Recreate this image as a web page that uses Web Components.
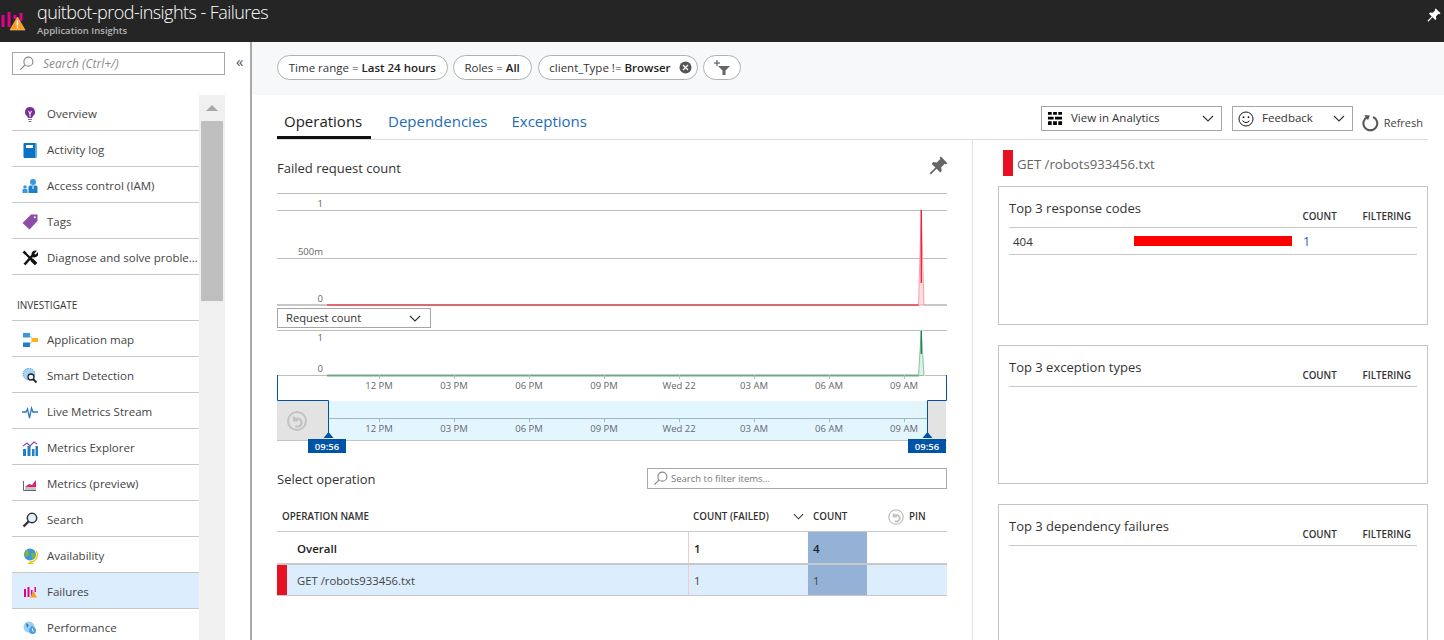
<!DOCTYPE html>
<html><head><meta charset="utf-8"><title>Failures</title>
<style>
html,body{margin:0;padding:0;height:640px;overflow:hidden;background:#fff;font-family:"Open Sans","Noto Sans",sans-serif;color:#333}
</style></head><body>
<x-app>
  <x-header slot="header" title-text="quitbot-prod-insights - Failures" sub="Application Insights"></x-header>
  <x-sidebar slot="side">
    <x-nav><svg slot="i" viewBox="0 0 16 16"><path d="M8 1a5 5 0 0 0-3 9l1 2h4l1-2a5 5 0 0 0-3-9z" fill="#7a2e98"/><path d="M6.500 5l1.500 3 1.500-3M8 8v3" stroke="#fff" fill="none"/><path d="M6 13.500h4M6.500 15.500h3" stroke="#777" stroke-width="1.200"/></svg>Overview</x-nav>
    <x-nav><svg slot="i" viewBox="0 0 16 16"><rect x="1.500" y="1" width="13" height="15" rx="1" fill="#0a72c4"/><rect x="13" y="1" width="1.500" height="15" fill="#59a8e0"/><rect x="4" y="3" width="7" height="3" fill="#fff"/></svg>Activity log</x-nav>
    <x-nav><svg slot="i" viewBox="0 0 16 16"><circle cx="11" cy="4" r="3" fill="#3a96dd"/><path d="M6.500 15V9q0-1.500 1.500-1.500h6q1.500 0 1.500 1.500v6z" fill="#1e80c8"/><path d="M11 8v3" stroke="#fff"/><circle cx="3" cy="9" r="1.800" fill="#3a96dd"/><path d="M.5 15v-3q0-1 1-1h3q1 0 1 1v3z" fill="#3a96dd"/></svg>Access control (IAM)</x-nav>
    <x-nav><svg slot="i" viewBox="0 0 16 16"><path d="M9 .5h6.500V7L7.500 15.500 .5 9z" fill="#8a4ea8"/><circle cx="12.800" cy="3.200" r="1" fill="#fff"/></svg>Tags</x-nav>
    <x-nav><svg slot="i" viewBox="0 0 16 16"><path d="M2.500 2.500L14 14" stroke="#111" stroke-width="2.200"/><path d="M9.500 9.500L14 14" stroke="#111" stroke-width="3.400"/><path d="M.5 2.500L2.500.5l2 2.500L3 4.500z" fill="#111"/><path d="M2.500 14.500L10.500 5.500" stroke="#111" stroke-width="2.600"/><path d="M9.500 5a4 4 0 0 1 5.500-4.200L12.500 3.300l.2 1 1 .2L16 2a4 4 0 0 1-4.500 5.500z" fill="#111"/></svg>Diagnose and solve proble...</x-nav>
    <x-section>INVESTIGATE</x-section>
    <x-nav><svg slot="i" viewBox="0 0 16 16"><rect x="1" y="1" width="7" height="4.500" fill="#3a96dd"/><rect x="1" y="10.500" width="7" height="4.500" fill="#1e80c8"/><path d="M8 3.500l3 4.500-3 4.500" stroke="#9cc8ea" fill="none"/><rect x="9.500" y="6" width="6.500" height="4" fill="#ffb020"/></svg>Application map</x-nav>
    <x-nav><svg slot="i" viewBox="0 0 16 16"><circle cx="7" cy="6" r="5.800" fill="#a8d4f0" stroke="#3a96dd" stroke-dasharray="1.500 1"/><circle cx="9" cy="9" r="3" fill="#e8f4fc" stroke="#222" stroke-width="1.300"/><path d="M11 11l3.500 3.500" stroke="#222" stroke-width="1.800"/></svg>Smart Detection</x-nav>
    <x-nav><svg slot="i" viewBox="0 0 16 16"><path d="M0 8h4l1.500-3 2 9 2-10 1.500 4h5" fill="none" stroke="#2a78c0" stroke-width="1.300"/></svg>Live Metrics Stream</x-nav>
    <x-nav><svg slot="i" viewBox="0 0 16 16"><path d="M1 6l4-3 3 3 4-4 3 2" fill="none" stroke="#8a4ea8" stroke-width="1.200"/><path d="M1 9h3v7H1zM5.500 6h3v10h-3zM10 9h2.500v7H10zM13.500 6H16v10h-2.500z" fill="#1e80c8"/></svg>Metrics Explorer</x-nav>
    <x-nav><svg slot="i" viewBox="0 0 16 16"><path d="M3 11l4-3 3 1 4-5v7z" fill="#d6246e"/><path d="M3 11h11v3H3z" fill="#c4c4c8"/><path d="M1.500 5v9.500H14" fill="none" stroke="#666"/></svg>Metrics (preview)</x-nav>
    <x-nav><svg slot="i" viewBox="0 0 16 16"><circle cx="10" cy="6" r="4.700" fill="#dff1fb" stroke="#333" stroke-width="1.500"/><path d="M6.500 9.500L1.500 14.500" stroke="#333" stroke-width="2.400"/></svg>Search</x-nav>
    <x-nav><svg slot="i" viewBox="0 0 16 16"><circle cx="8" cy="6.500" r="6" fill="#3a96dd"/><path d="M4 2q3 0 3 3t-3 4l-1.500-2zM9 5q4-1 4 2t-3 4z" fill="#7cb82f"/><path d="M14.500 3a7.500 7.500 0 0 1-7 11M6 15.500h5M8 14v1.500" fill="none" stroke="#f5c400" stroke-width="1.300"/></svg>Availability</x-nav>
    <x-nav active><svg slot="i" viewBox="0 0 16 16"><path d="M2 5h2v8H2zM5.500 3h2v10h-2z" fill="#e3008c"/><path d="M9 6h1.500v7H9zM12.500 3h1.500v5h-1.500z" fill="#e3008c"/><path d="M11.500 7l3.500 6.500H8z" fill="#ff9a1f"/></svg>Failures</x-nav>
    <x-nav><svg slot="i" viewBox="0 0 16 16"><circle cx="7" cy="7" r="5.500" fill="#9ccfef"/><path d="M4 3l3 2-2 3zM9 6l3 1-2 3z" fill="#1e80c8"/><circle cx="10.500" cy="10.500" r="3.500" fill="#4aa3e0"/><path d="M10.500 8.500v2l1.500 1" stroke="#fff" fill="none"/></svg>Performance</x-nav>
  </x-sidebar>
  <x-filterbar slot="filters">
    <x-pill>Time range = <b>Last 24 hours</b></x-pill>
    <x-pill style="margin-right:1px">Roles = <b>All</b></x-pill>
    <x-pill closable>client_Type != <b>Browser</b></x-pill>
    <x-pill add></x-pill>
  </x-filterbar>
  <x-tabbar slot="tabs"></x-tabbar>
  <x-left slot="left"></x-left>
  <div slot="right" style="display:flex;flex-direction:column">
    <x-op-title>GET /robots933456.txt</x-op-title>
    <x-card heading="Top 3 response codes"><x-code-row code="404" count="1"></x-code-row></x-card>
    <x-card heading="Top 3 exception types"></x-card>
    <x-card heading="Top 3 dependency failures"></x-card>
  </div>
</x-app>
<script>
const F='"Open Sans","Noto Sans",sans-serif';
function def(name,html,init){
  customElements.define(name,class extends HTMLElement{
    connectedCallback(){ if(this.shadowRoot) return;
      const r=this.attachShadow({mode:'open'});
      r.innerHTML=typeof html==='function'?html(this):html;
      if(init) init(this,r);
    }
  });
}
const chev=(c='#333',w=12)=>`<svg width="${w}" height="7" viewBox="0 0 12 7"><path d="M1 1l5 5 5-5" fill="none" stroke="${c}" stroke-width="1.100"/></svg>`;
const lens=(s,c='#888')=>`<svg width="${s}" height="${s}" viewBox="0 0 16 16"><circle cx="10" cy="6" r="4.800" fill="none" stroke="${c}" stroke-width="1.200"/><path d="M6.500 9.500L1.500 14.500" stroke="${c}" stroke-width="1.400"/></svg>`;
const pin=(c,s)=>`<svg width="${s}" height="${s}" viewBox="0 0 16 16"><path d="M10 .5l5.500 5.500-1.300 1.200-1-.6-3 3 .5 3-1.300 1.200-3-3.100-4.900 4.900-1-1 4.900-4.900-3.100-3L3.500 5l3 .5 3-3-.6-1z" fill="${c}"/></svg>`;
const undo=(c,s,w=1.600)=>`<svg width="${s}" height="${s}" viewBox="0 0 20 20"><circle cx="10" cy="10" r="9" fill="none" stroke="${c}" stroke-width="${w}"/><path d="M7 5.500v4h4M7.500 9a4 4 0 1 1 1 6" fill="none" stroke="${c}" stroke-width="2.200"/></svg>`;

def('x-app',`<style>
:host{display:grid;grid-template-columns:250px 2px 1fr;grid-template-rows:42px 1fr;width:1444px;height:640px;overflow:hidden}
.h{grid-column:1/-1}.rule{background:#a9a9a9}
.main{display:flex;flex-direction:column;min-width:0}
.tabs{margin:0 16px 0 25px}
.cols{display:flex;flex:1;min-height:0}
.l{width:670px;margin-left:25px}.d{width:1px;background:#e4e4e4;margin-left:25px}.r{width:430px;margin-left:25px}
</style>
<div class="h"><slot name="header"></slot></div>
<slot name="side"></slot><div class="rule"></div>
<div class="main"><slot name="filters"></slot><div class="tabs"><slot name="tabs"></slot></div>
<div class="cols"><div class="l"><slot name="left"></slot></div><div class="d"></div><div class="r"><slot name="right"></slot></div></div></div>`);

def('x-header',h=>`<style>
:host{display:flex;height:42px;background:#252525;color:#fff;position:relative}
.logo{width:37px;flex:none}
.t{font:300 18px/22px ${F};margin-top:1px;white-space:nowrap;letter-spacing:-.55px}
.s{font:600 9.500px/13px ${F};color:#b4b4b4;white-space:nowrap;margin-top:1px}
.pin{position:absolute;right:3px;top:5px}
</style>
<svg class="logo" width="37" height="42" viewBox="0 0 37 42"><path d="M1.500 15h3v12h-3zM7.500 12h3v15h-3zM13.500 15h3v4h-3zM19.500 13h3v8h-3z" fill="#e3008c"/><path d="M17.500 17l7.500 13H10z" fill="#ff9a1f" stroke="#ffd18a" stroke-width=".6"/><path d="M17.500 20.500v5M17.500 26.500v1.700" stroke="#fff" stroke-width="1.500"/></svg>
<div><div class="t">${h.getAttribute('title-text')}</div><div class="s">${h.getAttribute('sub')}</div></div>
<span class="pin">${pin('#fff',14)}</span>`);

def('x-sidebar',`<style>
:host{display:block;width:250px;height:598px;overflow:hidden;position:relative}
.top{display:flex;align-items:center;padding:10px 0 0 12px;height:23px}
.search{height:21px;border:1px solid #a6a6a6;display:flex;align-items:center;padding-left:6px;gap:9px;width:205px;font:italic 12px ${F};color:#8c8c8c}
.co{margin-left:11px;font:15px ${F};color:#555;line-height:20px;margin-top:-5px}
.body{display:flex;margin:20px 0 0 12px;height:545px}
.list{width:187px}
.sb{width:26px;background:#f0f0f0;display:flex;flex-direction:column;align-items:center}
.up{width:0;height:0;border:6px solid transparent;border-top:0;border-bottom:6px solid #a8a8a8;margin:10px 0 0}
.th{width:22px;height:180px;background:#bfbfbf;margin-top:10px}
</style>
<div class="top"><div class="search">${lens(15)}<span>Search (Ctrl+/)</span></div><span class="co">«</span></div>
<div class="body"><div class="list"><slot></slot></div><div class="sb"><div class="up"></div><div class="th"></div></div></div>`);

def('x-nav',`<style>
:host{display:flex;align-items:center;height:36px;box-sizing:border-box;padding-top:2px;border-bottom:1px solid #c8c8c8;padding-left:10px;gap:9px;font:11.500px ${F};color:#444;white-space:nowrap}
:host([active]){background:#dcedfd}
::slotted(svg){width:16px;height:16px;flex:none}
</style><slot name="i"></slot><slot></slot>`);

def('x-section',`<style>
:host{display:block;padding:23px 0 0 5px;box-sizing:border-box;height:46px;border-bottom:1px solid #c8c8c8;font:10px/14px ${F};color:#333}
</style><slot></slot>`);

def('x-filterbar',`<style>
:host{display:flex;align-items:center;gap:5px;height:53px;background:#f7f8fa;padding:0 0 2px 25px;box-sizing:border-box}
</style><slot></slot>`);

def('x-pill',h=>`<style>
:host{display:inline-flex;align-items:center;height:25px;border:1px solid #b0b0b0;border-radius:13px;box-sizing:border-box;padding:0 10.750px;background:#fff;font:11.500px ${F};color:#333;white-space:pre}
::slotted(b){font-weight:600;color:#222}
.x{margin-left:8px;margin-right:-5.500px;display:flex}
.a{display:flex;margin:0 -2px 0 -1.500px}
</style><slot></slot>${h.hasAttribute('closable')?`<span class="x"><svg width="13" height="13" viewBox="0 0 13 13"><circle cx="6.500" cy="6.500" r="6" fill="#555"/><path d="M4 4l5 5M9 4l-5 5" stroke="#fff" stroke-width="1.200"/></svg></span>`:''}${h.hasAttribute('add')?`<span class="a"><svg width="18" height="16" viewBox="0 0 18 16"><path d="M4 0v6M1 3h6" stroke="#444"/><path d="M5 6h12l-4.500 4.500V15h-3v-4.500z" fill="#666"/></svg></span>`:''}`);

def('x-dropdown',h=>`<style>
:host{display:flex;align-items:center;box-sizing:border-box;border:1px solid #a6a6a6;height:25px;font:11.500px ${F};color:#333;padding:0 7px 0 5px;white-space:nowrap}
.tx{padding-bottom:2px}.c{margin-left:auto;display:flex}
</style><slot name="i"></slot><span class="tx"><slot></slot></span><span class="c">${chev()}</span>`);

def('x-tabbar',`<style>
:host{display:flex;border-bottom:1px solid #ddd;height:44px}
.tab{font:15px/20px ${F};color:#1e6cb8;margin:16px 24px 0 0;white-space:nowrap}
.on{color:#222;padding:0 7px 5px;margin:16px 17px -1px 0;height:20px;width:80px;border-bottom:3px solid #111;box-sizing:content-box}
.sp{flex:1}
.tools{display:flex;gap:10px;padding-top:11px;height:25px}
.an{width:181px}.fb{width:121px}
.ref{display:flex;align-items:center;font:11px ${F};color:#444;gap:5px;margin:4px 5px 0 -1px;height:24px;width:61px}
svg{display:block}
</style>
<span class="tab on">Operations</span><span class="tab">Dependencies</span><span class="tab">Exceptions</span><span class="sp"></span>
<div class="tools">
<x-dropdown class="an"><svg slot="i" style="margin:0 8px 0 0" width="16" height="15" viewBox="0 0 17 16"><path d="M1 1h4v3H1zM6.500 1h4v3h-4zM12 1h4v3h-4zM1 6h6v3H1zM8.500 6H16v3H8.500zM1 11h4v4H1zM6.500 11h4v4h-4zM12 11h4v4h-4z" fill="#000"/></svg>View in Analytics</x-dropdown>
<x-dropdown class="fb"><svg slot="i" style="margin:0 8px 0 0" width="16" height="16" viewBox="0 0 18 18"><circle cx="9" cy="9" r="7.900" fill="none" stroke="#111" stroke-width="1.100"/><circle cx="6.200" cy="7" r="1" fill="#111"/><circle cx="11.800" cy="7" r="1" fill="#111"/><path d="M5 11q4 4 8 0" fill="none" stroke="#111" stroke-width="1.100"/></svg>Feedback</x-dropdown>
<span class="ref"><svg width="18" height="19" viewBox="0 0 18 19"><path d="M6 3.500A7.500 7.500 0 1 0 12 3.500" fill="none" stroke="#555" stroke-width="2.200"/><path d="M2.500 1.500l6 .5-2 5z" fill="#555"/></svg>Refresh</span>
</div>`);

function ticks(y,labY,col){const L=['12 PM','03 PM','06 PM','09 PM','Wed 22','03 AM','06 AM','09 AM'];
 return L.map((t,i)=>{const x=102+75*i;return `<path d="M${x+.5} ${y}v4" stroke="${col}"/><text x="${x}" y="${labY}" text-anchor="middle">${t}</text>`}).join('')}

def('x-left',`<style>
:host{display:block;font:11.500px ${F}}
.head{display:flex;justify-content:space-between;align-items:center;height:53px;padding:3px 0 0;box-sizing:border-box;font-size:13px;color:#333}
.head span.p{display:flex;margin:0 -1px 6px 0}
svg.c{display:block;width:670px;font:9.500px ${F};fill:#666}
.rc{width:154px;height:20px;padding:0 9px 0 8px;font-size:11.200px}
.sel{display:flex;justify-content:space-between;align-items:center;height:33px;margin-top:9px;font-size:13px;color:#333}
.f{box-sizing:border-box;width:300px;height:21px;border:1px solid #aaa;display:flex;align-items:center;gap:3px;padding-left:5px;font:9.500px ${F};color:#777}
</style>
<div class="head"><span>Failed request count</span><span class="p">${pin('#666',19)}</span></div>
<svg class="c" height="115" viewBox="0 0 670 115">
<path d="M0 .5H670M0 17.500H670M0 65.500H670" stroke="#bdbdbd"/>
<text x="46" y="14" text-anchor="end">1</text><text x="46" y="62" text-anchor="end">500m</text><text x="46" y="109" text-anchor="end">0</text>
<path d="M0 112H50M647 112H670" stroke="#c8c8c8" stroke-width="2"/>
<path d="M50 112H642" stroke="#dc6870" stroke-width="2"/>
<path d="M641.500 112L644.300 17L647 112z" fill="#fbdde1" stroke="#f0909c" stroke-width=".8"/>
<path d="M644.300 17V90" stroke="#f02040" stroke-width="1.400"/>
</svg>
<x-dropdown class="rc">Request count</x-dropdown>
<svg class="c" height="125" viewBox="0 0 670 125">
<path d="M0 2.500H670" stroke="#bdbdbd"/>
<text x="46" y="13" text-anchor="end">1</text><text x="46" y="44" text-anchor="end">0</text>
<path d="M0 47.500H50" stroke="#bdbdbd"/><path d="M50 47.500H642" stroke="#6fa887" stroke-width="2"/><path d="M648 47.500H670" stroke="#bdbdbd"/>
<path d="M641.500 47.500L644.300 2.500L647 47.500z" fill="#e0efe7" stroke="#6fb694" stroke-width=".8"/><path d="M644.300 3V26" stroke="#1a8a50" stroke-width="1.400"/>
<g>${ticks(47,61,'#bbb')}</g>
<rect x="51" y="73" width="599" height="39" fill="#e3f6fd"/>
<rect x="0" y="73" width="51" height="39" fill="#e3e3e3"/><rect x="650" y="73" width="19" height="39" fill="#e3e3e3"/>
<path d="M51 90.500H650" stroke="#9db8c8"/><g fill="#667">${ticks(90,104,'#9db8c8')}</g>
<path d="M0 112.500H670" stroke="#c4c4c4"/>
<path d="M.5 47V72.500H51.500V106M669.500 47V72.500H650.500V106" fill="none" stroke="#0054a6" stroke-width="1"/>
<path d="M51.500 104l5 6h-10zM650.500 104l5 6h-10z" fill="#0054a6"/>
<rect x="31" y="111" width="38" height="14" fill="#0054a6"/><rect x="631" y="111" width="38" height="14" fill="#0054a6"/>
<text x="50" y="122" text-anchor="middle" style="fill:#fff;font-size:9.500px;font-weight:600">09:56</text><text x="650" y="122" text-anchor="middle" style="fill:#fff;font-size:9.500px;font-weight:600">09:56</text>
<g transform="translate(10 83)">${undo('#c2c2c2',20,2)}</g>
</svg>
<div class="sel"><span>Select operation</span><div class="f">${lens(15)}<span>Search to filter items...</span></div></div>
<x-op-table></x-op-table>`);

def('x-op-table',`<style>
:host{display:block;margin-top:8px;width:670px}
.g{display:grid;grid-template-columns:411px 120px 59px 80px}
.g>div{display:flex;align-items:center;box-sizing:border-box}
.hd>div{height:29px;border-bottom:1px solid #c8c8c8;font:600 9.800px ${F};color:#333;padding-bottom:1px;white-space:nowrap}
.hd{height:29px}
.r1>div{height:31px;font:600 11.500px ${F};color:#222;padding-top:1px}
.r2{border-top:2px solid #c8c8c8;border-bottom:1px solid #c8c8c8;background:#dcedfd}
.r2>div{height:30px;font:11.300px ${F};color:#444;padding-top:1px}
.n{padding-left:20px;position:relative}
.r2 .n::before{content:"";position:absolute;left:0;top:0;bottom:0;width:10px;background:#e81123}
.cf{border-left:1px solid #f7c8cf;padding-left:5px}
.ct{background:#94b1d6;padding-left:5px}
</style>
<div class="g hd"><div style="padding-left:5px">OPERATION NAME</div><div style="padding-left:5px;justify-content:space-between;padding-right:4px">COUNT (FAILED) ${chev('#333',11)}</div><div style="padding-left:5px">COUNT</div><div style="padding-left:21px;gap:5px">${undo('#c2c2c2',16)}<span>PIN</span></div></div>
<div class="g r1"><div class="n">Overall</div><div class="cf">1</div><div class="ct">4</div><div></div></div>
<div class="g r2"><div class="n">GET /robots933456.txt</div><div class="cf">1</div><div class="ct">1</div><div></div></div>`);

def('x-op-title',`<style>
:host{display:flex;align-items:center;gap:4px;height:46px;font:13.200px ${F};color:#666;padding:0 0 0 5px;box-sizing:border-box}
i{width:10px;height:26px;background:#e81123;display:block}
span{padding-top:2px}
</style><i></i><span><slot></slot></span>`);

def('x-card',h=>`<style>
:host{display:block;box-sizing:border-box;width:430px;height:139px;border:1px solid #c4c4c4;margin-bottom:20px;padding:0 10px}
.h{display:flex;height:41px;border-bottom:1px solid #c8c8c8;box-sizing:border-box}
.t{font:13px ${F};color:#333;flex:1;padding-top:12px}
.c{font:600 9.800px ${F};color:#333;padding-top:23px}
.c1{width:60px}
</style><div class="h"><span class="t">${h.getAttribute('heading')}</span><span class="c c1">COUNT</span><span class="c">FILTERING</span><span style="width:6px"></span></div><slot></slot>`);

def('x-code-row',h=>`<style>
:host{display:flex;align-items:center;height:27px;border-bottom:1px solid #c8c8c8;box-sizing:border-box;font:11.500px ${F};color:#333;padding-left:4px}
.c{width:121px}.b{width:158px;height:10px;background:#f00}.n{margin-left:11px;color:#1565c0;font-size:12.500px}
</style><span class="c">${h.getAttribute('code')}</span><span class="b"></span><span class="n">${h.getAttribute('count')}</span>`);
</script>
</body></html>
